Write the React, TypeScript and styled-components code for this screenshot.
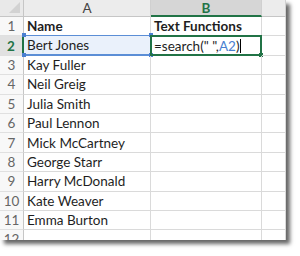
import React from 'react';
import styled, { createGlobalStyle, css } from 'styled-components';

const GlobalStyles = createGlobalStyle`
  html, body {
    margin: 0;
    padding: 0;
    background: #ffffff;
  }
  body {
    font-family: Lato, "Open Sans", sans-serif;
  }
`;

const Page = styled.div`
  width: 300px;
  height: 256px;
  background: #ffffff;
  overflow: hidden;
`;

const Sheet = styled.div`
  width: 286px;
  height: 240px;
  overflow: hidden;
  background: #ffffff;
  box-shadow: 4px 4px 4px rgba(0, 0, 0, 0.6);
  display: grid;
  grid-template-columns: 24px 127px 111px 1fr;
  grid-template-rows: 17px repeat(12, 19.4px);
`;

const Corner = styled.div`
  position: relative;
  background: #e9e9e9;
  border-right: 1px solid #c6c6c6;
  border-bottom: 1px solid #c6c6c6;
  box-sizing: border-box;
`;

const CornerTriangle = styled.div`
  position: absolute;
  right: 3px;
  bottom: 3px;
  width: 0;
  height: 0;
  border-left: 11px solid transparent;
  border-bottom: 11px solid #d2d2d2;
`;

const ColHeader = styled.div<{ $active?: boolean }>`
  box-sizing: border-box;
  display: flex;
  align-items: center;
  justify-content: center;
  font-size: 13.5px;
  color: #444;
  background: #ececec;
  border-right: 1px solid #d0d0d0;
  border-bottom: 1px solid #c6c6c6;
  ${p =>
    p.$active &&
    css`
      background: #d6d6d6;
      color: #217346;
      font-weight: bold;
      border-bottom: 2px solid #217346;
    `}
`;

const RowHeader = styled.div<{ $active?: boolean }>`
  box-sizing: border-box;
  display: flex;
  align-items: center;
  justify-content: center;
  font-size: 13.5px;
  color: #666;
  background: #f8f8f8;
  border-right: 1px solid #c6c6c6;
  border-bottom: 1px solid #e0e0e0;
  ${p =>
    p.$active &&
    css`
      background: #e1e1e1;
      color: #217346;
      font-weight: bold;
      border-right: 2px solid #217346;
    `}
`;

const Cell = styled.div<{ $bold?: boolean }>`
  position: relative;
  box-sizing: border-box;
  display: flex;
  align-items: center;
  padding-left: 3px;
  font-size: 13.5px;
  color: #1e1e1e;
  white-space: nowrap;
  font-weight: ${p => (p.$bold ? 'bold' : 'normal')};
  border-right: 1px solid #dadada;
  border-bottom: 1px solid #dadada;
`;

const RefCell = styled(Cell)`
  background: #eaf1fb;
  border-top: 1px solid #5b8ed6;
  border-bottom: 2px solid #5b8ed6;
  margin-top: -1px;
`;

const EditCell = styled(Cell)`
  border: 2px solid #217346;
  margin-left: -1px;
  margin-top: -1px;
  padding-left: 2px;
`;

const Handle = styled.span<{ $color: string; $top?: boolean; $left?: boolean }>`
  position: absolute;
  width: 4px;
  height: 4px;
  background: ${p => p.$color};
  ${p => (p.$top ? 'top: -3px;' : 'bottom: -3px;')}
  ${p => (p.$left ? 'left: -2px;' : 'right: -3px;')}
`;

const RefText = styled.span`
  color: #4a7fd1;
`;

const Caret = styled.span`
  display: inline-block;
  width: 1px;
  height: 14px;
  background: #000;
  margin-left: 1px;
`;

const names = [
  'Kay Fuller',
  'Neil Greig',
  'Julia Smith',
  'Paul Lennon',
  'Mick McCartney',
  'George Starr',
  'Harry McDonald',
  'Kate Weaver',
  'Emma Burton',
  '',
];

export default function App() {
  return (
    <Page>
      <GlobalStyles />
      <Sheet>
        <Corner>
          <CornerTriangle />
        </Corner>
        <ColHeader>A</ColHeader>
        <ColHeader $active>B</ColHeader>
        <ColHeader />

        <RowHeader>1</RowHeader>
        <Cell $bold>Name</Cell>
        <Cell $bold>Text Functions</Cell>
        <Cell />

        <RowHeader $active>2</RowHeader>
        <RefCell>
          Bert Jones
          <Handle $color="#4a7fd1" $top $left />
          <Handle $color="#4a7fd1" $top />
          <Handle $color="#4a7fd1" $left />
          <Handle $color="#4a7fd1" />
        </RefCell>
        <EditCell>
          =search(" ",<RefText>A2</RefText>)
          <Caret />
          <Handle $color="#217346" />
        </EditCell>
        <Cell />

        {names.map((name, i) => (
          <React.Fragment key={i}>
            <RowHeader>{i + 3}</RowHeader>
            <Cell>{name}</Cell>
            <Cell />
            <Cell />
          </React.Fragment>
        ))}
      </Sheet>
    </Page>
  );
}
